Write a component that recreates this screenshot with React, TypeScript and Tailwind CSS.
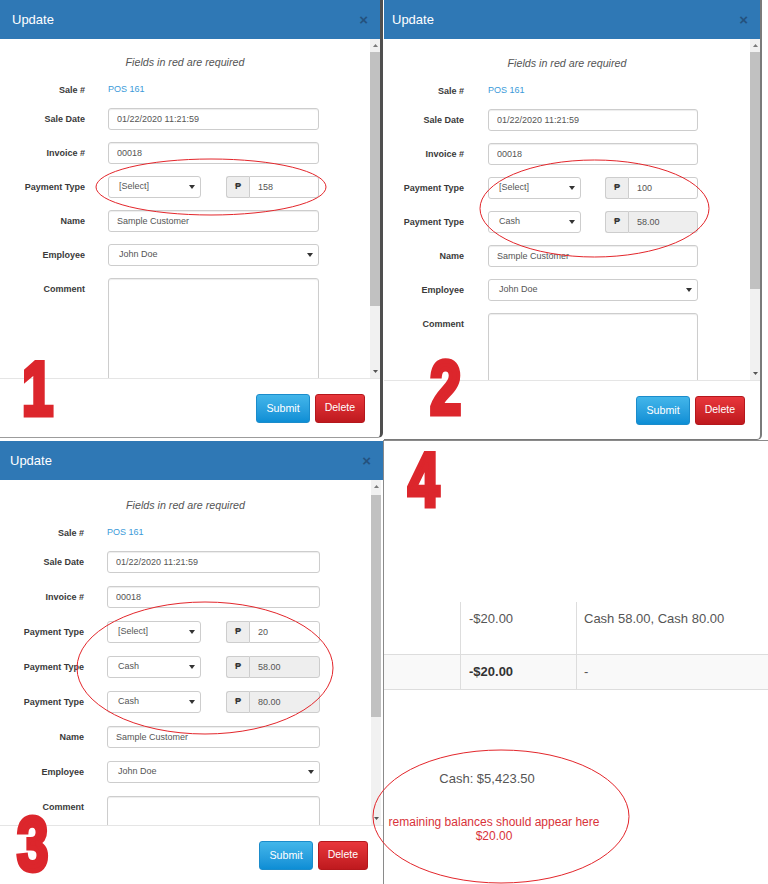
import React from "react";

type Payment = { type: string; amount: string; locked?: boolean };

type PanelCfg = {
  frame: string;
  head: string;
  body: string;
  pt: string;
  label: string;
  gap: string;
  ctrl: string;
  half: string;
  rows: string;
  thumb: string;
  footer: string;
  payments: Payment[];
};

const font = "font-['Liberation_Sans',Arial,sans-serif]";

const one: PanelCfg = {
  frame: "w-[383px] h-[438px] border-r-[3px] border-b border-r-[#4f4f4f] border-b-[#9c9c9c] rounded-br-[5px]",
  head: "pl-[12px] pr-[12px]",
  body: "h-[339px]",
  pt: "pt-[16px]",
  label: "w-[85px]",
  gap: "gap-[23px]",
  ctrl: "w-[211px]",
  half: "w-[93px]",
  rows: "gap-[12px]",
  thumb: "h-[254px]",
  footer: "pr-[15px]",
  payments: [{ type: "[Select]", amount: "158" }],
};

const two: PanelCfg = {
  frame: "w-[378px] h-[440px] border-r-2 border-b border-[#7a7a7a] rounded-br-[5px]",
  head: "pl-[8px] pr-[12px]",
  body: "h-[341px]",
  pt: "pt-[17px]",
  label: "w-[80px]",
  gap: "gap-[24px]",
  ctrl: "w-[210px]",
  half: "w-[93px]",
  rows: "gap-[12px]",
  thumb: "h-[237px]",
  footer: "pr-[15px]",
  payments: [
    { type: "[Select]", amount: "100" },
    { type: "Cash", amount: "58.00", locked: true },
  ],
};

const three: PanelCfg = {
  frame: "w-[383px] h-[443px]",
  head: "pl-[10px] pr-[12px]",
  body: "h-[345px] pr-[2px]",
  pt: "pt-[18px]",
  label: "w-[84px]",
  gap: "gap-[23px]",
  ctrl: "w-[213px]",
  half: "w-[94px]",
  rows: "gap-[13px]",
  thumb: "mt-[2px] h-[222px]",
  footer: "pr-[15px]",
  payments: [
    { type: "[Select]", amount: "20" },
    { type: "Cash", amount: "58.00", locked: true },
    { type: "Cash", amount: "80.00", locked: true },
  ],
};

const Caret = () => (
  <svg width="6" height="4" viewBox="0 0 6 4">
    <path d="M0 0h6L3 4z" fill="#333" />
  </svg>
);

function Label({ cls, children, extra = "" }: { cls: string; children: React.ReactNode; extra?: string }) {
  return (
    <div className={`${cls} shrink-0 text-right text-[9px] font-bold leading-[12px] text-[#3a3a3a] ${extra}`}>
      {children}
    </div>
  );
}

function Box({ value, cls, locked }: { value: string; cls: string; locked?: boolean }) {
  return (
    <input
      readOnly
      value={value}
      className={`${cls} h-[22px] rounded-[3px] border border-[#cdcdcd] px-[8px] text-[9px] text-[#555] shadow-[inset_0_1px_1px_rgba(0,0,0,0.075)] outline-none ${
        locked ? "bg-[#eee]" : "bg-white"
      } ${font}`}
    />
  );
}

function Pick({ value, cls }: { value: string; cls: string }) {
  return (
    <div
      className={`${cls} flex h-[22px] items-center justify-between rounded-[3px] border border-[#cdcdcd] bg-white pl-[10px] pr-[5px] text-[9px] text-[#555]`}
    >
      <span>{value}</span>
      <Caret />
    </div>
  );
}

function Scroll({ thumb }: { thumb: string }) {
  return (
    <div className="flex w-[10px] shrink-0 flex-col bg-[#f1f1f1]">
      <div className="flex h-[13px] items-center justify-center">
        <svg width="5" height="3" viewBox="0 0 5 3">
          <path d="M0 3h5L2.5 0z" fill="#7a7a7a" />
        </svg>
      </div>
      <div className="flex-1">
        <div className={`bg-[#c1c1c1] ${thumb}`} />
      </div>
      <div className="flex h-[13px] items-center justify-center">
        <svg width="5" height="3" viewBox="0 0 5 3">
          <path d="M0 0h5L2.5 3z" fill="#555" />
        </svg>
      </div>
    </div>
  );
}

function Modal({ cfg }: { cfg: PanelCfg }) {
  return (
    <div className={`flex shrink-0 flex-col overflow-hidden bg-white ${cfg.frame}`}>
      <div className={`flex h-[39px] shrink-0 items-center justify-between bg-[#2f78b5] ${cfg.head}`}>
        <span className="text-[13px] text-white">Update</span>
        <span className="text-[15px] font-bold leading-none text-[#24527e]">×</span>
      </div>

      <div className={`flex shrink-0 ${cfg.body}`}>
        <div className={`flex min-w-0 flex-1 flex-col overflow-hidden ${cfg.pt}`}>
          <p className="text-center text-[10.7px] italic leading-[14px] text-[#555]">Fields in red are required</p>

          <div className={`mt-[13px] flex h-[16px] shrink-0 items-center ${cfg.gap}`}>
            <Label cls={cfg.label}>Sale #</Label>
            <span className="text-[9px] text-[#3a9ad9]">POS 161</span>
          </div>

          <div className={`mt-[10px] flex flex-col ${cfg.rows}`}>
            <div className={`flex h-[22px] shrink-0 items-center ${cfg.gap}`}>
              <Label cls={cfg.label}>Sale Date</Label>
              <Box cls={cfg.ctrl} value="01/22/2020 11:21:59" />
            </div>
            <div className={`flex h-[22px] shrink-0 items-center ${cfg.gap}`}>
              <Label cls={cfg.label}>Invoice #</Label>
              <Box cls={cfg.ctrl} value="00018" />
            </div>
            {cfg.payments.map((p, i) => (
              <div key={i} className={`flex h-[22px] shrink-0 items-center ${cfg.gap}`}>
                <Label cls={cfg.label}>Payment Type</Label>
                <div className={`flex justify-between ${cfg.ctrl}`}>
                  <Pick cls={cfg.half} value={p.type} />
                  <div className={`flex h-[22px] ${cfg.half}`}>
                    <span className="flex w-[23px] shrink-0 items-center justify-center rounded-l-[3px] border border-r-0 border-[#cdcdcd] bg-[#eee] text-[9px] font-bold text-[#333]">
                      ₱
                    </span>
                    <input
                      readOnly
                      value={p.amount}
                      className={`h-[22px] min-w-0 flex-1 rounded-r-[3px] border border-[#cdcdcd] px-[8px] text-[9px] text-[#555] outline-none ${
                        p.locked ? "bg-[#eee]" : "bg-white"
                      } ${font}`}
                    />
                  </div>
                </div>
              </div>
            ))}
            <div className={`flex h-[22px] shrink-0 items-center ${cfg.gap}`}>
              <Label cls={cfg.label}>Name</Label>
              <Box cls={cfg.ctrl} value="Sample Customer" />
            </div>
            <div className={`flex h-[22px] shrink-0 items-center ${cfg.gap}`}>
              <Label cls={cfg.label}>Employee</Label>
              <Pick cls={cfg.ctrl} value="John Doe" />
            </div>
            <div className={`flex shrink-0 items-start ${cfg.gap}`}>
              <Label cls={cfg.label} extra="pt-[5px]">
                Comment
              </Label>
              <textarea
                readOnly
                className={`${cfg.ctrl} h-[120px] shrink-0 resize-none rounded-[3px] border border-[#cdcdcd] bg-white shadow-[inset_0_1px_1px_rgba(0,0,0,0.075)] outline-none`}
              />
            </div>
          </div>
        </div>
        <Scroll thumb={cfg.thumb} />
      </div>

      <div className={`flex flex-1 items-center justify-end gap-[5px] border-t border-[#e5e5e5] ${cfg.footer}`}>
        <button className="h-[29px] rounded-[3px] border border-[#1b8ccb] bg-linear-to-b from-[#42b6ea] to-[#0c8ed5] px-[9px] text-[10.7px] text-white">
          Submit
        </button>
        <button className="h-[29px] rounded-[3px] border border-[#b5171c] bg-linear-to-b from-[#e8363b] to-[#bf191e] px-[9px] text-[10.5px] text-white">
          Delete
        </button>
      </div>
    </div>
  );
}

function Result() {
  return (
    <div className="flex min-w-0 flex-1 flex-col border-l border-t border-[#8a8a8a]">
      <div className="mt-[161px] flex h-[53px] border-b border-[#ddd] text-[13px] leading-[18px] text-[#555]">
        <div className="w-[77px] shrink-0 border-r border-[#ddd]" />
        <div className="w-[116px] shrink-0 border-r border-[#ddd] pl-[8px] pt-[8px]">-$20.00</div>
        <div className="flex-1 pl-[7px] pt-[8px]">Cash 58.00, Cash 80.00</div>
      </div>
      <div className="flex h-[35px] border-b border-[#ddd] bg-[#f9f9f9] text-[13px] leading-[18px] text-[#555]">
        <div className="w-[77px] shrink-0 border-r border-[#ddd]" />
        <div className="w-[116px] shrink-0 border-r border-[#ddd] pl-[8px] pt-[8px] font-bold text-[#333]">-$20.00</div>
        <div className="flex-1 pl-[7px] pt-[8px]">-</div>
      </div>
      <p className="mt-[80px] w-[206px] text-center text-[13px] leading-[18px] text-[#555]">Cash: $5,423.50</p>
      <p className="mt-[27px] w-[220px] text-center text-[12px] leading-[14px] text-[#d8333a]">
        remaining balances should appear here
        <br />
        $20.00
      </p>
    </div>
  );
}

const numeral =
  "pointer-events-none absolute origin-top-left scale-x-[0.74] text-[76px] font-bold leading-none text-[#dc262c] [-webkit-text-stroke:5px_#dc262c]";

export default function App() {
  return (
    <div className={`relative h-[884px] w-[768px] overflow-hidden bg-white ${font}`}>
      <div className="flex h-[440px] items-start gap-[1px]">
        <Modal cfg={one} />
        <Modal cfg={two} />
      </div>
      <div className="flex h-[444px]">
        <div className="w-[383px] shrink-0 pt-[1px]">
          <Modal cfg={three} />
        </div>
        <Result />
      </div>

      <span className={`${numeral} left-[22px] top-[351px]`}>1</span>
      <span className={`${numeral} left-[430px] top-[350px]`}>2</span>
      <span className={`${numeral} left-[17px] top-[806px]`}>3</span>
      <span className={`${numeral} left-[408px] top-[442px]`}>4</span>

      <svg
        className="pointer-events-none absolute left-0 top-0"
        width="768"
        height="884"
        fill="none"
        stroke="#e3262b"
        strokeWidth="1"
      >
        <ellipse cx="211" cy="187" rx="115" ry="28" />
        <ellipse cx="594.5" cy="208.5" rx="114.5" ry="48.5" />
        <ellipse cx="205" cy="668" rx="128" ry="66" />
        <ellipse cx="501" cy="816.5" rx="128" ry="66.5" />
      </svg>
    </div>
  );
}
